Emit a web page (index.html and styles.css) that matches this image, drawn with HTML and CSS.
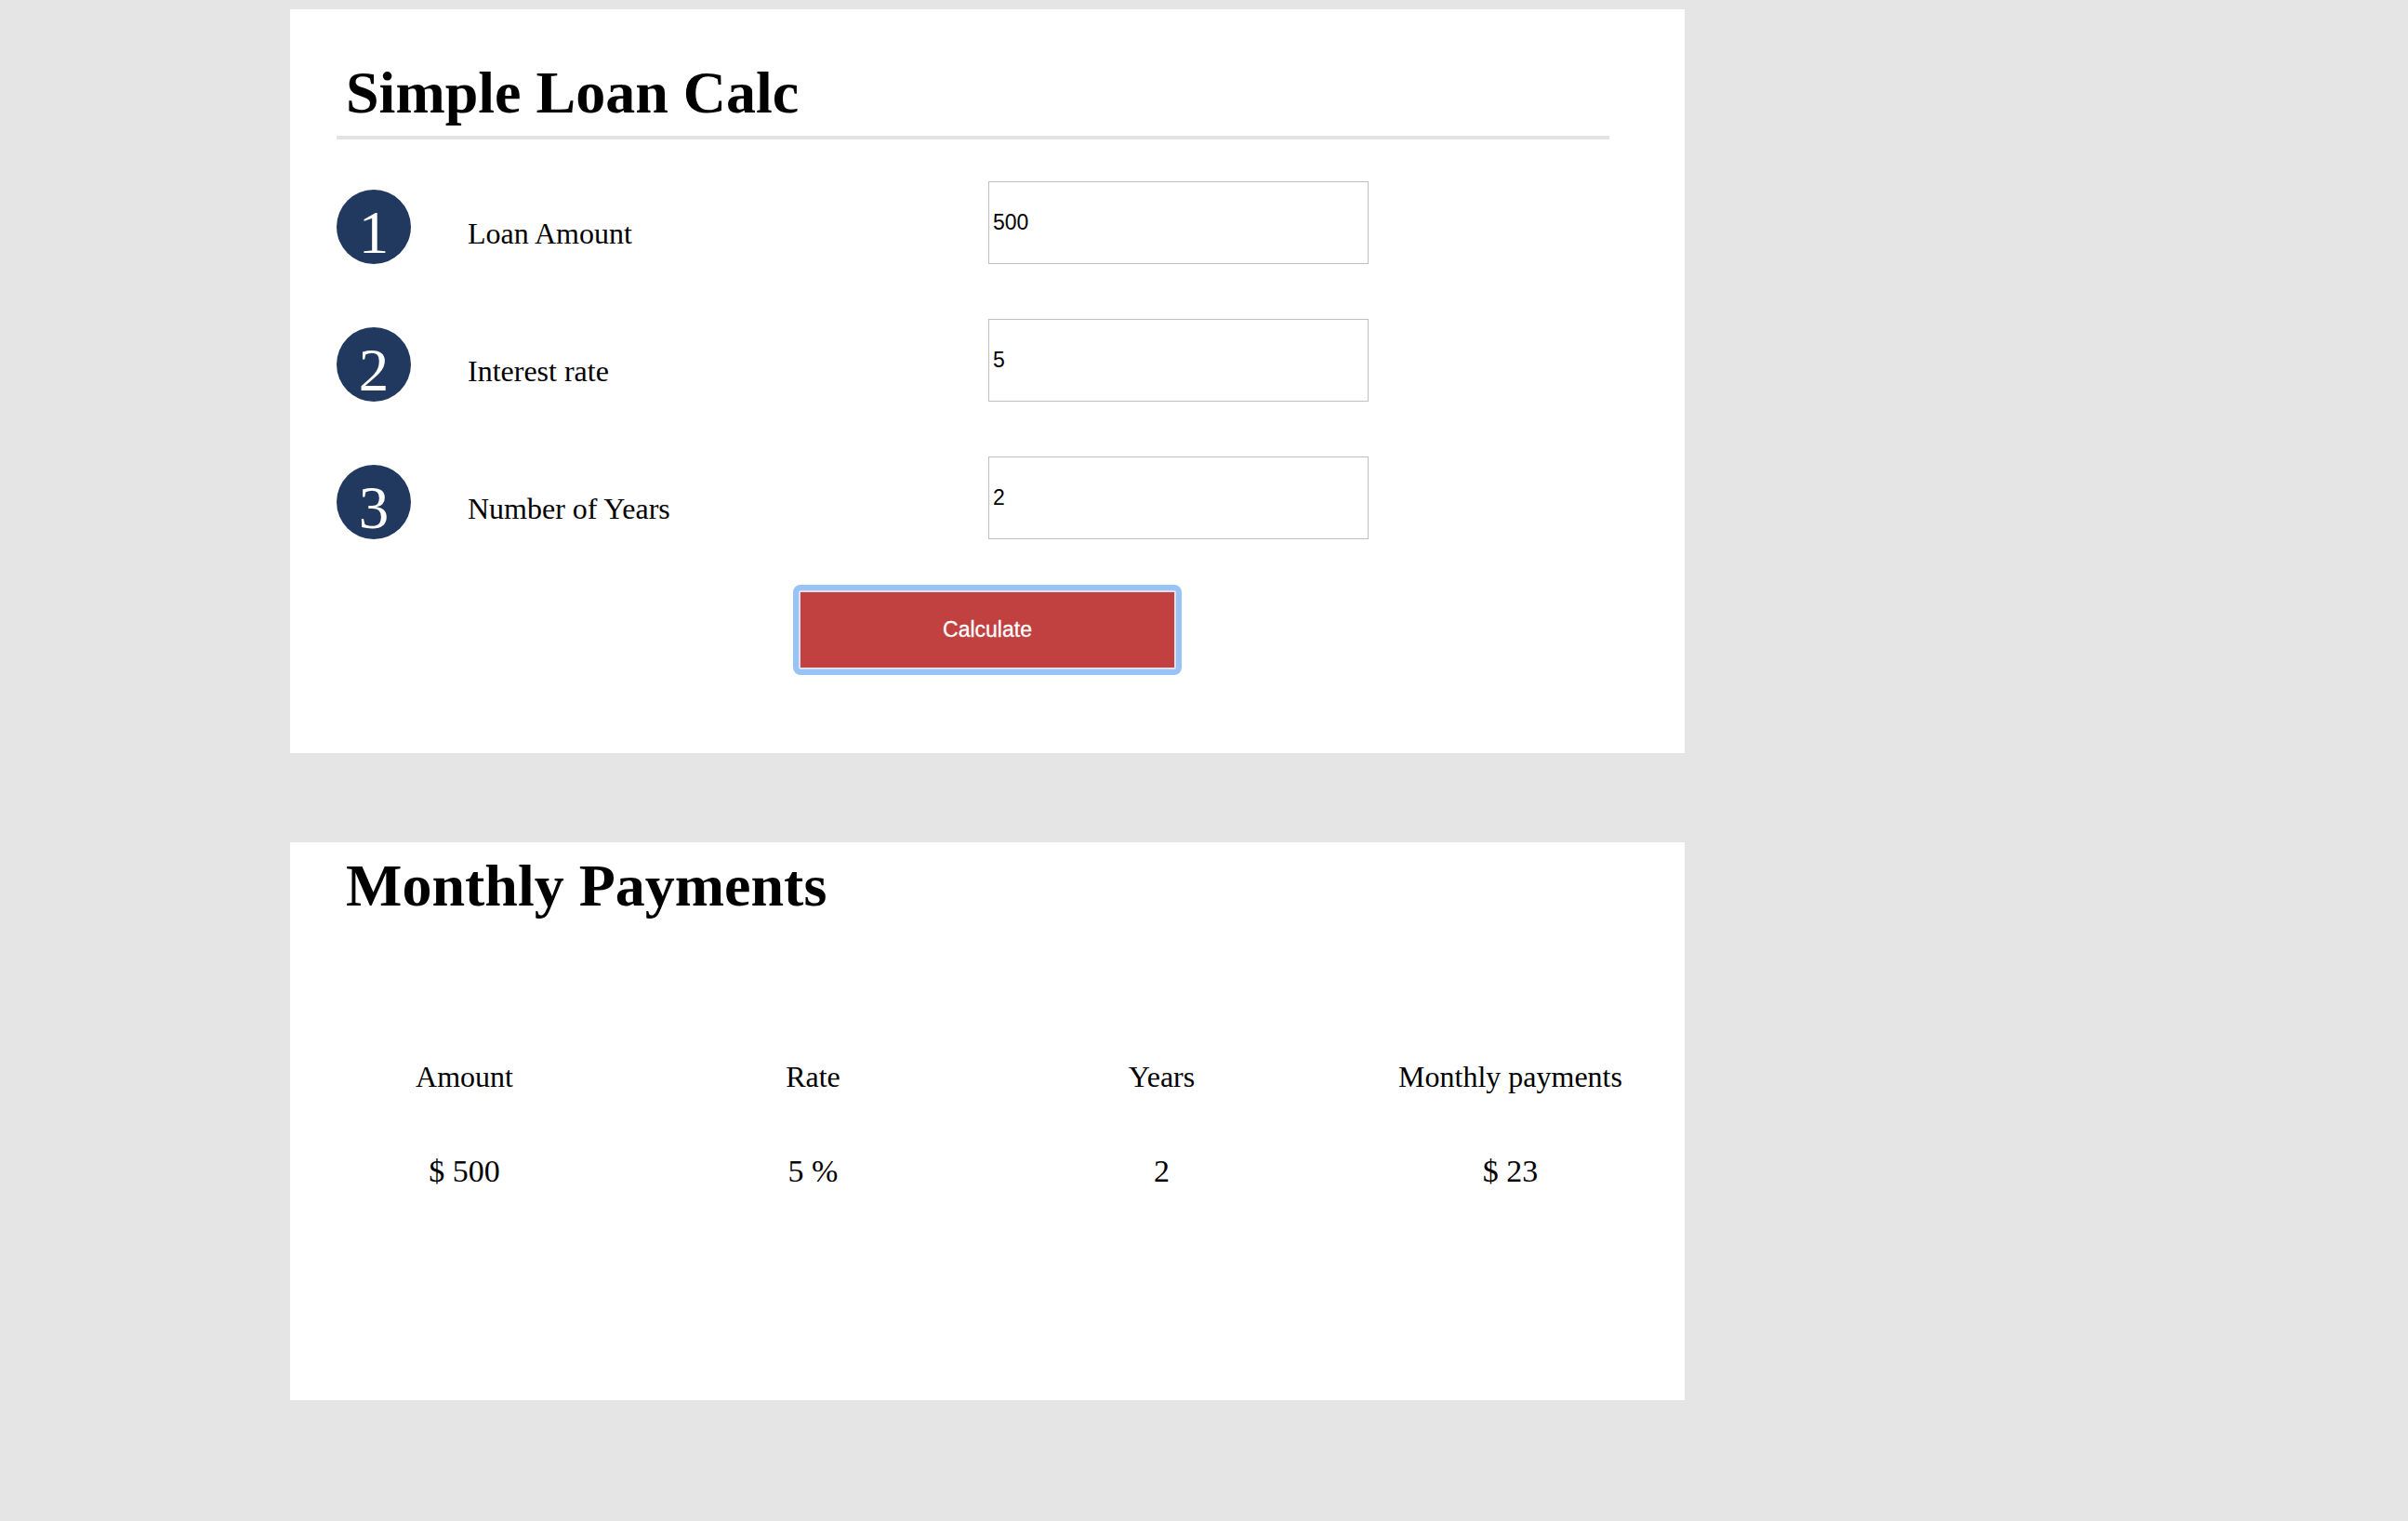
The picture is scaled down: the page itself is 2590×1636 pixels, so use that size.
FILE: index.html
```html
<!DOCTYPE html>
<html lang="en">
<head>
<meta charset="utf-8">
<title>Simple Loan Calc</title>
<link rel="stylesheet" href="styles.css">
</head>
<body>
<div class="page">
  <section class="card card-calc">
    <h1 class="title">Simple Loan Calc</h1>
    <div class="rows">
      <div class="row">
        <span class="step">1</span>
        <label class="label" for="amount">Loan Amount</label>
        <input class="field" id="amount" type="text" value="500">
      </div>
      <div class="row">
        <span class="step">2</span>
        <label class="label" for="rate">Interest rate</label>
        <input class="field" id="rate" type="text" value="5">
      </div>
      <div class="row">
        <span class="step">3</span>
        <label class="label" for="years">Number of Years</label>
        <input class="field" id="years" type="text" value="2">
      </div>
    </div>
    <div class="actions">
      <button class="btn" type="button">Calculate</button>
    </div>
  </section>

  <section class="card card-results">
    <h1 class="title title-plain">Monthly Payments</h1>
    <div class="table">
      <div class="th">Amount</div>
      <div class="th">Rate</div>
      <div class="th">Years</div>
      <div class="th">Monthly payments</div>
      <div class="td">$ 500</div>
      <div class="td">5 %</div>
      <div class="td">2</div>
      <div class="td">$ 23</div>
    </div>
  </section>
</div>
</body>
</html>
```

FILE: styles.css
```css
html, body {
  margin: 0;
  padding: 0;
}

body {
  background: #e5e5e5;
  font-family: "Liberation Serif", "Times New Roman", serif;
  color: #000;
  min-height: 1636px;
}

.page {
  padding: 10px 0 0 312px;
  display: flex;
  flex-direction: column;
  gap: 96px;
}

.card {
  width: 1500px;
  background: #fff;
  box-sizing: border-box;
  padding-top: 10px;
}

.title {
  font-size: 64px;
  font-weight: bold;
  line-height: normal;
  margin: 43px 81px 0 50px;
  padding: 0 0 9px 10px;
  border-bottom: 4px solid #e3e3e3;
}

.title-plain {
  margin-top: 0;
  padding-bottom: 0;
  border-bottom: none;
}

.rows {
  margin: 45px 0 0 50px;
  display: flex;
  flex-direction: column;
  gap: 59px;
}

.row {
  display: flex;
  align-items: flex-end;
  height: 89px;
}

.step {
  flex: none;
  width: 80px;
  height: 80px;
  border-radius: 50%;
  background: #22395f;
  color: #fff;
  font-size: 65px;
  line-height: 92px;
  text-align: center;
  margin-right: 61px;
}

.label {
  flex: none;
  width: 560px;
  font-size: 32px;
  line-height: normal;
  padding-bottom: 14px;
}

.field {
  flex: none;
  width: 409px;
  height: 89px;
  box-sizing: border-box;
  margin: 0;
  padding: 0 4px;
  border: 1px solid #c0c0c0;
  border-radius: 0;
  background: #fff;
  color: #000;
  font: 23px "Liberation Sans", Arial, sans-serif;
  outline: none;
}

.actions {
  display: flex;
  justify-content: center;
  margin-top: 55px;
  padding-bottom: 90px;
}

.btn {
  position: relative;
  width: 406px;
  height: 85px;
  box-sizing: border-box;
  margin: 0;
  padding: 0;
  border: 2px solid #dde1ea;
  border-radius: 0;
  background: #c14040;
  color: #fff;
  font: 500 23px "Liberation Sans", Arial, sans-serif;
  -webkit-text-stroke: 0.3px #fff;
  cursor: pointer;
}

.btn::after {
  content: "";
  position: absolute;
  inset: -8px;
  border: 6px solid #99c2f7;
  border-radius: 8px;
  pointer-events: none;
}

.card-results {
  height: 600px;
}

.table {
  display: grid;
  grid-template-columns: repeat(4, 1fr);
  margin-top: 150px;
  row-gap: 64px;
  text-align: center;
}

.th {
  font-size: 32px;
  line-height: normal;
}

.td {
  font-size: 34px;
  line-height: 37px;
}
```
